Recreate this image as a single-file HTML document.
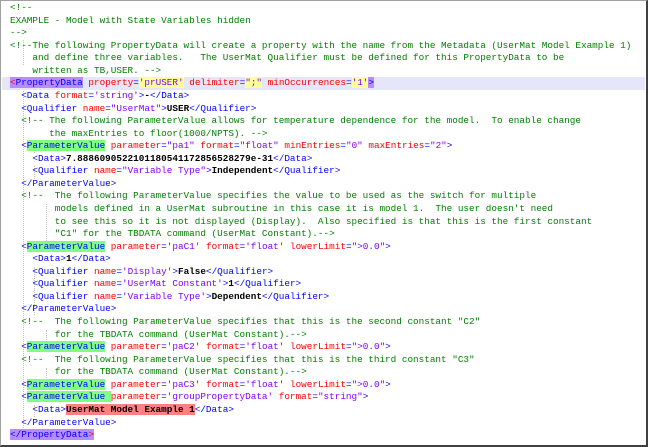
<!DOCTYPE html>
<html><head><style>
html,body{margin:0;padding:0;background:#fff;}
#w{position:relative;width:648px;height:447px;overflow:hidden;box-sizing:border-box;border-top:1px solid #a0a0a0;border-left:1px solid #a0a0a0;border-right:2px solid #404040;border-bottom:2px solid #404040;}
.l{position:absolute;left:9px;height:12.56px;line-height:12.56px;white-space:pre;font-family:"Liberation Mono",monospace;font-size:9.33px;color:#0000ff;}
.c{color:#008000}
.t{color:#0000ff}
.a{color:#ff0000}
.v{color:#8000ff}
.x{color:#000;font-weight:bold}
.pd{background:#b88cff}
.pv{background:#80ff80}
.y{background:#ffff99}
.r{background:#ff8080}
.hl{position:absolute;left:1px;right:1px;top:76px;height:13px;background:#e6e6fa}
.g{position:absolute;width:0;border-left:1px dotted #c0c0c0}
</style></head><body><div id="w">
<div class="hl"></div>
<div class="g" style="left:22px;top:39px;height:25px"></div>
<div class="g" style="left:22px;top:90px;height:347px"></div>
<div class="g" style="left:33px;top:140px;height:12px"></div>
<div class="g" style="left:33px;top:165px;height:13px"></div>
<div class="g" style="left:45px;top:203px;height:37px"></div>
<div class="g" style="left:33px;top:266px;height:48px"></div>
<div class="g" style="left:45px;top:329px;height:12px"></div>
<div class="g" style="left:45px;top:367px;height:12px"></div>
<div class="g" style="left:33px;top:404px;height:12px"></div>
<div class="l c" style="top:1px">&lt;!--</div>
<div class="l c" style="top:13.6px">EXAMPLE - Model with State Variables hidden</div>
<div class="l c" style="top:26.1px">--&gt;</div>
<div class="l c" style="top:38.7px">&lt;!--The following PropertyData will create a property with the name from the Metadata (UserMat Model Example 1)</div>
<div class="l c" style="top:51.2px">    and define three variables.   The UserMat Qualifier must be defined for this PropertyData to be</div>
<div class="l c" style="top:63.8px">    written as TB,USER. --&gt;</div>
<div class="l" style="top:76.4px"><span class="pd"><span class="a">&lt;</span>PropertyData</span> <span class="a">property</span>=<span class="y"><span class="v">'prUSER'</span></span> <span class="a">delimiter</span>=<span class="y"><span class="v">";"</span></span> <span class="a">minOccurrences</span>=<span class="y"><span class="v">'1'</span></span><span class="pd">&gt;</span></div>
<div class="l" style="top:88.9px">  &lt;Data <span class="a">format</span>=<span class="v">'string'</span>&gt;<span class="x">-</span>&lt;/Data&gt;</div>
<div class="l" style="top:101.5px">  &lt;Qualifier <span class="a">name</span>=<span class="v">"UserMat"</span>&gt;<span class="x">USER</span>&lt;/Qualifier&gt;</div>
<div class="l c" style="top:114px">  &lt;!-- The following ParameterValue allows for temperature dependence for the model.  To enable change</div>
<div class="l c" style="top:126.6px">       the maxEntries to floor(1000/NPTS). --&gt;</div>
<div class="l" style="top:139.2px">  &lt;<span class="pv">ParameterValue</span> <span class="a">parameter</span>=<span class="v">"pa1"</span> <span class="a">format</span>=<span class="v">"float"</span> <span class="a">minEntries</span>=<span class="v">"0"</span> <span class="a">maxEntries</span>=<span class="v">"2"</span>&gt;</div>
<div class="l" style="top:151.7px">    &lt;Data&gt;<span class="x">7.88860905221011805411728565282<span style="letter-spacing:0">79e-31</span></span>&lt;/Data&gt;</div>
<div class="l" style="top:164.3px">    &lt;Qualifier <span class="a">name</span>=<span class="v">"Variable Type"</span>&gt;<span class="x">Independent</span>&lt;/Qualifier&gt;</div>
<div class="l" style="top:176.8px">  &lt;/ParameterValue&gt;</div>
<div class="l c" style="top:189.4px">  &lt;!--  The following ParameterValue specifies the value to be used as the switch for multiple</div>
<div class="l c" style="top:202px">        models defined in a UserMat subroutine in this case it is model 1.  The user doesn't need</div>
<div class="l c" style="top:214.5px">        to see this so it is not displayed (Display).  Also specified is that this is the first constant</div>
<div class="l c" style="top:227.1px">        "C1" for the TBDATA command (UserMat Constant).--&gt;</div>
<div class="l" style="top:239.6px">  &lt;<span class="pv">ParameterValue</span> <span class="a">parameter</span>=<span class="v">'paC1'</span> <span class="a">format</span>=<span class="v">'float'</span> <span class="a">lowerLimit</span>=<span class="v">"&gt;0.0"</span>&gt;</div>
<div class="l" style="top:252.2px">    &lt;Data&gt;<span class="x">1</span>&lt;/Data&gt;</div>
<div class="l" style="top:264.8px">    &lt;Qualifier <span class="a">name</span>=<span class="v">'Display'</span>&gt;<span class="x">False</span>&lt;/Qualifier&gt;</div>
<div class="l" style="top:277.3px">    &lt;Qualifier <span class="a">name</span>=<span class="v">'UserMat Constant'</span>&gt;<span class="x">1</span>&lt;/Qualifier&gt;</div>
<div class="l" style="top:289.9px">    &lt;Qualifier <span class="a">name</span>=<span class="v">'Variable Type'</span>&gt;<span class="x">Dependent</span>&lt;/Qualifier&gt;</div>
<div class="l" style="top:302.4px">  &lt;/ParameterValue&gt;</div>
<div class="l c" style="top:315px">  &lt;!--  The following ParameterValue specifies that this is the second constant "C2"</div>
<div class="l c" style="top:327.6px">        for the TBDATA command (UserMat Constant).--&gt;</div>
<div class="l" style="top:340.1px">  &lt;<span class="pv">ParameterValue</span> <span class="a">parameter</span>=<span class="v">'paC2'</span> <span class="a">format</span>=<span class="v">'float'</span> <span class="a">lowerLimit</span>=<span class="v">"&gt;0.0"</span>&gt;</div>
<div class="l c" style="top:352.7px">  &lt;!--  The following ParameterValue specifies that this is the third constant "C3"</div>
<div class="l c" style="top:365.2px">        for the TBDATA command (UserMat Constant).--&gt;</div>
<div class="l" style="top:377.8px">  &lt;<span class="pv">ParameterValue</span> <span class="a">parameter</span>=<span class="v">'paC3'</span> <span class="a">format</span>=<span class="v">'float'</span> <span class="a">lowerLimit</span>=<span class="v">"&gt;0.0"</span>&gt;</div>
<div class="l" style="top:390.4px">  &lt;<span class="pv">ParameterValue </span><span class="a">parameter</span>=<span class="v">'groupPropertyData'</span> <span class="a">format</span>=<span class="v">"string"</span>&gt;</div>
<div class="l" style="top:402.9px">    &lt;Data&gt;<span class="x r">UserMat Model Example 1</span>&lt;/Data&gt;</div>
<div class="l" style="top:415.5px">  &lt;/ParameterValue&gt;</div>
<div class="l" style="top:428px"><span class="pd">&lt;/PropertyData<span class="a">&gt;</span></span></div>
</div></body></html>
